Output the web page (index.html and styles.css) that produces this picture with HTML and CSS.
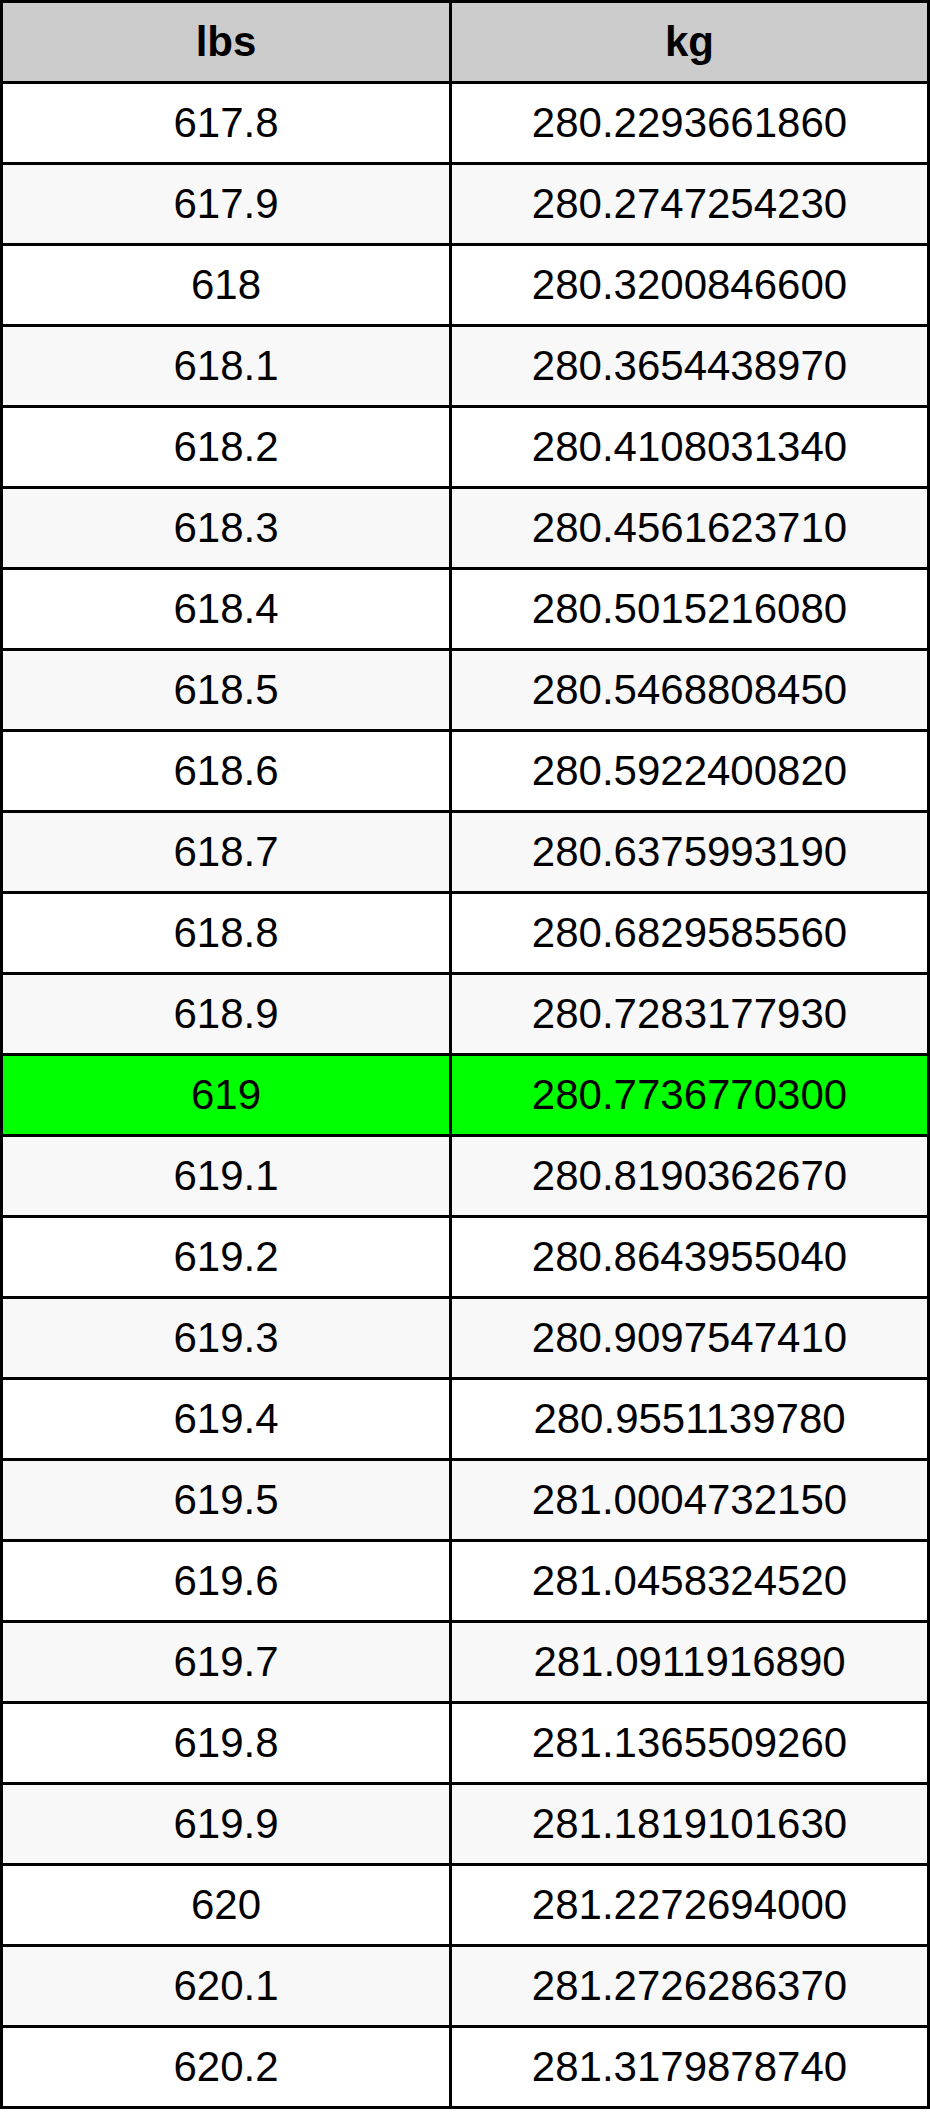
FILE: index.html
```html
<!DOCTYPE html>
<html>
<head>
<meta charset="utf-8">
<link rel="stylesheet" href="styles.css">
</head>
<body>
<table class="conv">
<thead>
<tr><th class="c1">lbs</th><th class="c2">kg</th></tr>
</thead>
<tbody>
<tr><td class="c1">617.8</td><td class="c2">280.2293661860</td></tr>
<tr class="alt"><td class="c1">617.9</td><td class="c2">280.2747254230</td></tr>
<tr><td class="c1">618</td><td class="c2">280.3200846600</td></tr>
<tr class="alt"><td class="c1">618.1</td><td class="c2">280.3654438970</td></tr>
<tr><td class="c1">618.2</td><td class="c2">280.4108031340</td></tr>
<tr class="alt"><td class="c1">618.3</td><td class="c2">280.4561623710</td></tr>
<tr><td class="c1">618.4</td><td class="c2">280.5015216080</td></tr>
<tr class="alt"><td class="c1">618.5</td><td class="c2">280.5468808450</td></tr>
<tr><td class="c1">618.6</td><td class="c2">280.5922400820</td></tr>
<tr class="alt"><td class="c1">618.7</td><td class="c2">280.6375993190</td></tr>
<tr><td class="c1">618.8</td><td class="c2">280.6829585560</td></tr>
<tr class="alt"><td class="c1">618.9</td><td class="c2">280.7283177930</td></tr>
<tr class="hl"><td class="c1">619</td><td class="c2">280.7736770300</td></tr>
<tr class="alt"><td class="c1">619.1</td><td class="c2">280.8190362670</td></tr>
<tr><td class="c1">619.2</td><td class="c2">280.8643955040</td></tr>
<tr class="alt"><td class="c1">619.3</td><td class="c2">280.9097547410</td></tr>
<tr><td class="c1">619.4</td><td class="c2">280.9551139780</td></tr>
<tr class="alt"><td class="c1">619.5</td><td class="c2">281.0004732150</td></tr>
<tr><td class="c1">619.6</td><td class="c2">281.0458324520</td></tr>
<tr class="alt"><td class="c1">619.7</td><td class="c2">281.0911916890</td></tr>
<tr><td class="c1">619.8</td><td class="c2">281.1365509260</td></tr>
<tr class="alt"><td class="c1">619.9</td><td class="c2">281.1819101630</td></tr>
<tr><td class="c1">620</td><td class="c2">281.2272694000</td></tr>
<tr class="alt"><td class="c1">620.1</td><td class="c2">281.2726286370</td></tr>
<tr><td class="c1">620.2</td><td class="c2">281.3179878740</td></tr>
</tbody>
</table>
</body>
</html>
```
FILE: styles.css
```css
html, body {
  margin: 0;
  padding: 0;
  background: #ffffff;
}
.conv {
  border-collapse: separate;
  border-spacing: 0;
  border-top: 3px solid #000;
  border-left: 3px solid #000;
  table-layout: fixed;
  width: 930px;
  font-family: "Liberation Sans", Arial, sans-serif;
  font-size: 42px;
  color: #000;
}
.conv th,
.conv td {
  box-sizing: content-box;
  height: 78px;
  padding: 0;
  border-right: 3px solid #000;
  border-bottom: 3px solid #000;
  text-align: center;
  vertical-align: middle;
  line-height: 1;
  background: #ffffff;
}
.conv th {
  font-weight: bold;
  background: #cccccc;
}
.conv .c1 {
  width: 446px;
}
.conv .c2 {
  width: 475px;
}
.conv tr.alt td {
  background: #f8f8f8;
}
.conv tr.hl td {
  background: #00ff00;
}
```
